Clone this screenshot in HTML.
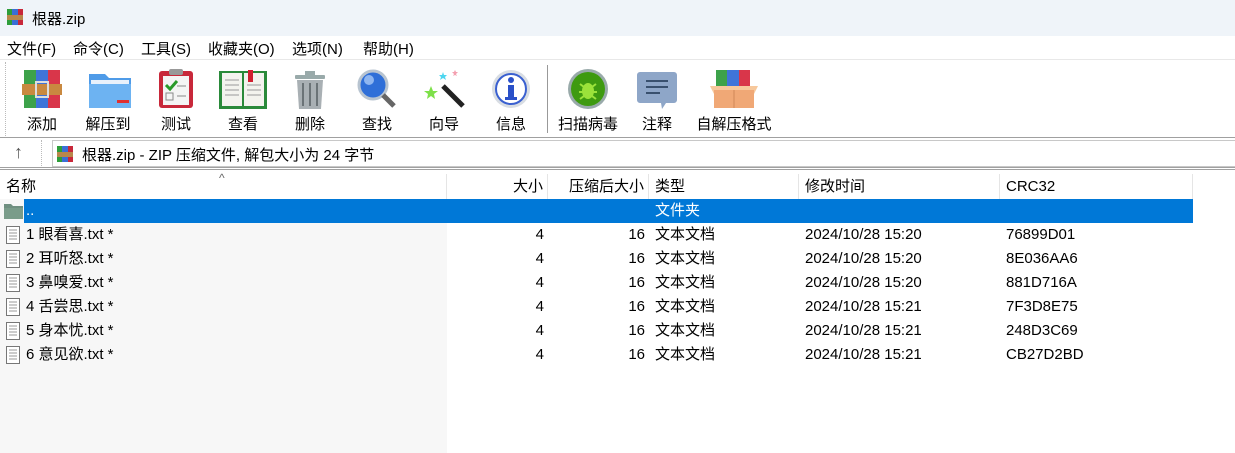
<!DOCTYPE html>
<html><head><meta charset="utf-8"><style>
*{margin:0;padding:0;box-sizing:border-box}
body{width:1235px;height:453px;overflow:hidden;background:#fff;font-family:"Liberation Sans","Noto Sans CJK SC",sans-serif;font-size:15px;color:#000;position:relative}
.abs{position:absolute}
#title{left:0;top:0;width:1235px;height:36px;background:#eff4f9}
#menu{left:0;top:36px;width:1235px;height:23px;background:#fff}
#menu span{position:absolute;top:2px}
#tb{left:0;top:59px;width:1235px;height:79px;background:#fff;border-top:1px solid #e8e8e8;border-bottom:1px solid #a0a0a0}
.btn{position:absolute;top:4px;text-align:center;width:64px}
.btn .ic{width:42px;height:42px;margin:4px auto 0;position:relative}
.btn .lb{margin-top:3px;font-size:15px}
#addr{left:0;top:138px;width:1235px;height:32px;background:#fff;border-bottom:3px double #a0a0a0}
#addrbox{left:52px;top:140px;width:1190px;height:27px;border:1px solid #c8c8c8;background:#fff}
#namecol{left:0;top:174px;width:447px;height:279px;background:#f7f7f7}
.hdr{top:174px;height:25px;line-height:25px;border-right:1px solid #e5e5e5;background:#fff}
.row{position:absolute;left:0;width:1235px;height:24px;line-height:24px}
.row span{position:absolute}
.r{text-align:right}
</style></head><body>
<div id="title" class="abs">
 <svg class="abs" style="left:6px;top:8px" width="18" height="18"><rect x="1" y="1" width="5" height="16" fill="#2e9e3a"/><rect x="6" y="1" width="6" height="16" fill="#3a6fd6"/><rect x="12" y="1" width="5" height="16" fill="#c8283a"/><rect x="1" y="7" width="16" height="5" fill="#b9874b"/></svg>
 <span class="abs" style="left:32px;top:8px;font-size:15px">根器.zip</span>
</div>
<div id="menu" class="abs">
 <span style="left:7px">文件(F)</span><span style="left:73px">命令(C)</span><span style="left:141px">工具(S)</span><span style="left:208px">收藏夹(O)</span><span style="left:292px">选项(N)</span><span style="left:363px">帮助(H)</span>
</div>
<div id="tb" class="abs">
 <div class="abs" style="left:5px;top:2px;height:74px;border-left:1px dotted #bbb"></div>
 <div class="btn" style="left:10px"><div class="ic"><svg width="42" height="42"><rect x="3" y="2" width="12" height="38" fill="#3da24a"/><rect x="15" y="2" width="12" height="38" fill="#3f74d9"/><rect x="27" y="2" width="12" height="38" fill="#d9364a"/><rect x="1" y="16" width="40" height="11" fill="#c98940"/><rect x="15" y="14" width="12" height="15" fill="none" stroke="#ddd" stroke-width="2"/></svg></div><div class="lb">添加</div></div>
 <div class="btn" style="left:76px"><div class="ic"><svg width="46" height="42"><path d="M2 6h16l4 4h22v28H2z" fill="#4f9be8"/><rect x="4" y="12" width="38" height="8" fill="#e8f1fb"/><path d="M2 16h42v24H2z" fill="#6db3f2"/><rect x="30" y="32" width="12" height="3" fill="#e03030"/></svg></div><div class="lb">解压到</div></div>
 <div class="btn" style="left:144px"><div class="ic"><svg width="42" height="42"><rect x="4" y="3" width="34" height="37" rx="3" fill="#c8283a"/><rect x="8" y="8" width="26" height="29" fill="#f4f4f4"/><rect x="14" y="1" width="14" height="6" rx="2" fill="#999"/><path d="M11 17l4 4 7-8" stroke="#2a9a2a" stroke-width="3" fill="none"/><rect x="11" y="25" width="7" height="7" fill="none" stroke="#888"/><path d="M22 18h9M22 28h9" stroke="#888"/></svg></div><div class="lb">测试</div></div>
 <div class="btn" style="left:211px"><div class="ic" style="width:50px"><svg width="50" height="42"><rect x="1" y="3" width="48" height="38" fill="#2a8a3a"/><rect x="4" y="5" width="20" height="33" fill="#f3f3ee"/><rect x="26" y="5" width="20" height="33" fill="#f3f3ee"/><rect x="30" y="2" width="5" height="12" fill="#d02030"/><path d="M7 12h14M7 17h14M7 22h14M7 27h14M29 17h14M29 22h14M29 27h14" stroke="#999"/></svg></div><div class="lb">查看</div></div>
 <div class="btn" style="left:278px"><div class="ic"><svg width="42" height="42"><rect x="6" y="7" width="30" height="4" rx="1" fill="#9aa"/><rect x="16" y="3" width="10" height="4" fill="#9aa"/><path d="M8 12h26l-2 29H10z" fill="#a9b0b4"/><path d="M14 15v23M21 15v23M28 15v23" stroke="#6b7377" stroke-width="2"/></svg></div><div class="lb">删除</div></div>
 <div class="btn" style="left:345px"><div class="ic"><svg width="42" height="42"><circle cx="17" cy="17" r="14" fill="#2f6fd8" stroke="#b8c4d0" stroke-width="3"/><circle cx="13" cy="12" r="5" fill="#8fb6f0"/><path d="M27 27l11 11" stroke="#666" stroke-width="5"/></svg></div><div class="lb">查找</div></div>
 <div class="btn" style="left:412px"><div class="ic"><svg width="42" height="42"><path d="M20 18l20 20" stroke="#222" stroke-width="5"/><polygon points="8,18 10,23 15,23 11,26 12,31 8,28 4,31 5,26 1,23 6,23" fill="#7ee04a"/><polygon points="20,4 21,7 24,7 22,9 23,12 20,10 17,12 18,9 16,7 19,7" fill="#4dd6f0"/><polygon points="32,2 33,4 35,4 33,6 34,8 32,7 30,8 31,6 29,4 31,4" fill="#f4a0b0"/></svg></div><div class="lb">向导</div></div>
 <div class="btn" style="left:479px"><div class="ic"><svg width="42" height="42"><circle cx="21" cy="21" r="19" fill="#d8dde3"/><circle cx="21" cy="21" r="15" fill="#fff" stroke="#3a60d0" stroke-width="2"/><circle cx="21" cy="12" r="3" fill="#2a50c8"/><rect x="18" y="17" width="6" height="13" fill="#2a50c8"/><rect x="15" y="29" width="12" height="3" fill="#2a50c8"/></svg></div><div class="lb">信息</div></div>
 <div class="abs" style="left:547px;top:5px;width:1px;height:68px;background:#999"></div>
 <div class="btn" style="left:556px"><div class="ic"><svg width="42" height="42"><circle cx="21" cy="21" r="20" fill="#9aa"/><circle cx="21" cy="21" r="17" fill="#3e9a10"/><ellipse cx="21" cy="23" rx="6" ry="8" fill="#9be23a"/><path d="M13 16l4 3M29 16l-4 3M12 24h5M30 24h-5M13 31l4-3M29 31l-4-3" stroke="#9be23a" stroke-width="2"/></svg></div><div class="lb">扫描病毒</div></div>
 <div class="btn" style="left:625px"><div class="ic"><svg width="42" height="42"><path d="M4 4h34a3 3 0 0 1 3 3v25a3 3 0 0 1-3 3H30l-4 6-1-6H4a3 3 0 0 1-3-3V7a3 3 0 0 1 3-3z" fill="#8ea6c8"/><path d="M10 13h22M10 19h22M10 25h14" stroke="#39506e" stroke-width="2"/></svg></div><div class="lb">注释</div></div>
 <div class="btn" style="left:692px;width:84px"><div class="ic" style="width:52px"><svg width="52" height="42"><rect x="8" y="2" width="11" height="20" fill="#3da24a"/><rect x="19" y="2" width="12" height="20" fill="#3f74d9"/><rect x="31" y="2" width="11" height="20" fill="#d9364a"/><path d="M2 18h48l-4 8H6z" fill="#f7c89c"/><rect x="6" y="22" width="40" height="18" fill="#f0a876"/><path d="M26 22v18" stroke="#d08858"/></svg></div><div class="lb">自解压格式</div></div>
</div>
<div id="addr" class="abs">
 <span class="abs" style="left:14px;top:4px;font-size:18px;color:#555">↑</span>
 <div class="abs" style="left:41px;top:2px;height:26px;border-left:1px dotted #bbb"></div>
</div>
<div id="addrbox" class="abs">
 <svg class="abs" style="left:3px;top:4px" width="18" height="18"><rect x="1" y="1" width="5" height="16" fill="#2e9e3a"/><rect x="6" y="1" width="6" height="16" fill="#3a6fd6"/><rect x="12" y="1" width="5" height="16" fill="#c8283a"/><rect x="1" y="7" width="16" height="5" fill="#b9874b"/></svg>
 <span class="abs" style="left:29px;top:3px">根器.zip - ZIP 压缩文件, 解包大小为 24 字节</span>
</div>
<div id="namecol" class="abs"></div>
<div class="abs hdr" style="left:0;width:447px"><span style="padding-left:6px">名称</span><span class="abs" style="left:219px;top:-8px;font-size:12px;color:#666">^</span></div>
<div class="abs hdr r" style="left:447px;width:101px;padding-right:4px">大小</div>
<div class="abs hdr r" style="left:548px;width:101px;padding-right:4px">压缩后大小</div>
<div class="abs hdr" style="left:649px;width:150px;padding-left:6px">类型</div>
<div class="abs hdr" style="left:799px;width:201px;padding-left:6px">修改时间</div>
<div class="abs hdr" style="left:1000px;width:193px;padding-left:6px">CRC32</div>
<div class="abs" style="left:1193px;top:174px;width:42px;height:25px;background:#fff"></div>
<div class="row" style="top:199px">
 <div class="abs" style="left:24px;top:0;width:1169px;height:24px;background:#0078d7"></div>
 <svg class="abs" style="left:4px;top:4px" width="19" height="16"><path d="M0 1h7l2 2h10v13H0z" fill="#6f8f80"/><rect x="0" y="5" width="19" height="11" fill="#7a9c8a"/></svg>
 <span style="left:26px;color:#fff">..</span><span style="left:655px;color:#fff">文件夹</span>
</div>
<div id="rows"></div>
<script>
var d=[["1 眼看喜.txt *","2024/10/28 15:20","76899D01"],["2 耳听怒.txt *","2024/10/28 15:20","8E036AA6"],["3 鼻嗅爱.txt *","2024/10/28 15:20","881D716A"],["4 舌尝思.txt *","2024/10/28 15:21","7F3D8E75"],["5 身本忧.txt *","2024/10/28 15:21","248D3C69"],["6 意见欲.txt *","2024/10/28 15:21","CB27D2BD"]];
var h="";d.forEach(function(r,i){h+='<div class="row" style="top:'+(223+i*24)+'px"><svg class="abs" style="left:6px;top:3px" width="14" height="18"><rect x="0.5" y="0.5" width="13" height="17" fill="#fff" stroke="#777"/><path d="M3 4h8M3 7h8M3 10h8M3 13h8" stroke="#999"/></svg><span style="left:26px">'+r[0]+'</span><span class="r" style="left:447px;width:97px">4</span><span class="r" style="left:548px;width:97px">16</span><span style="left:655px">文本文档</span><span style="left:805px">'+r[1]+'</span><span style="left:1006px">'+r[2]+'</span></div>'});
document.getElementById("rows").innerHTML=h;
</script>
</body></html>
